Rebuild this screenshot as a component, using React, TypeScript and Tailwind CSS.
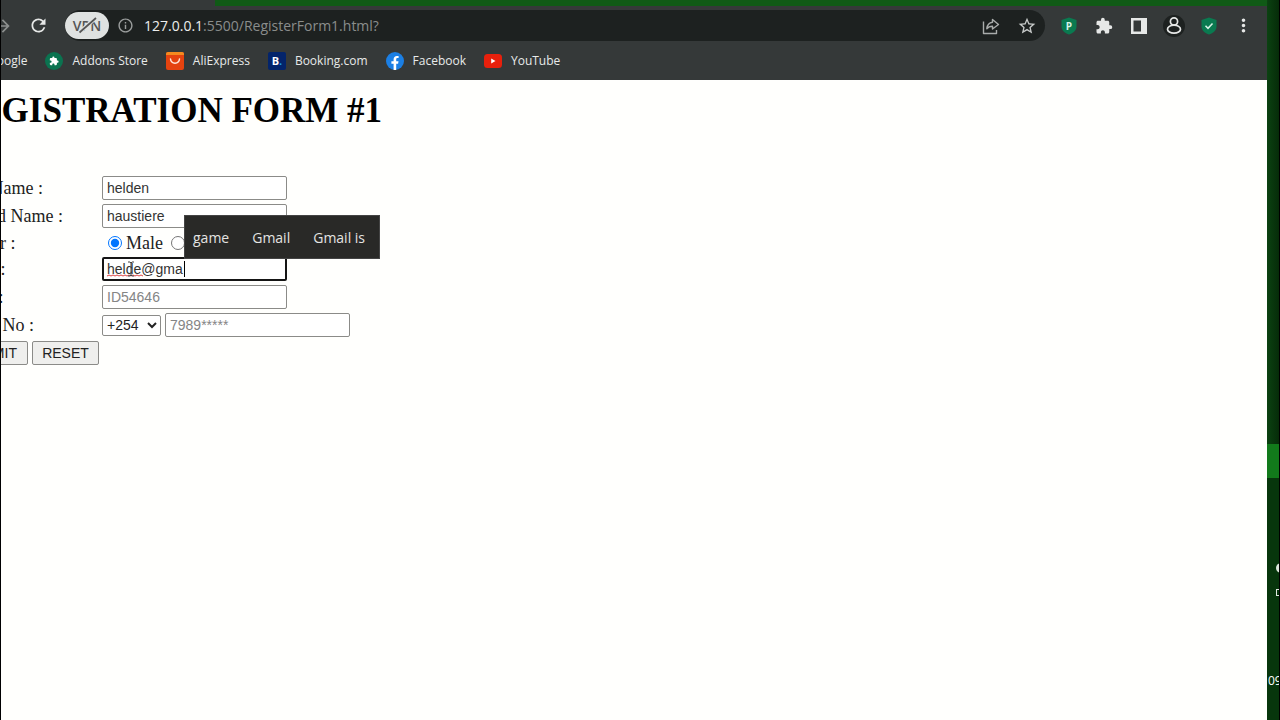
import React, { useState } from 'react';
import { MdArrowForward, MdExtension, MdInfoOutline, MdMoreVert, MdRefresh, MdStarBorder } from 'react-icons/md';

interface Bookmark {
  label: string;
  icon: React.ReactNode;
}

const BOOKMARKS: Bookmark[] = [
  {
    label: 'Google',
    icon: <span className="block w-4 h-4 rounded-full bg-white" />,
  },
  {
    label: 'Addons Store',
    icon: (
      <span className="flex w-[18px] h-[18px] items-center justify-center rounded-full bg-[#0b7350] text-white">
        <MdExtension size={10} />
      </span>
    ),
  },
  {
    label: 'AliExpress',
    icon: (
      <svg viewBox="0 0 18 18" className="w-[18px] h-[18px]">
        <rect width="18" height="18" rx="2" fill="#e5430f" />
        <path d="M0 2a2 2 0 0 1 2-2h14a2 2 0 0 1 2 2v1H0z" fill="#f58a1f" />
        <path d="M4.5 7c.6 5.500 8.400 5.500 9 0" fill="none" stroke="#ffe9dc" strokeWidth="1.500" strokeLinecap="round" />
      </svg>
    ),
  },
  {
    label: 'Booking.com',
    icon: (
      <span className="flex w-[18px] h-[18px] items-center justify-center rounded-xs bg-[#03246b] text-[11px] font-bold text-white">
        B<span className="text-[#1c9be0]">.</span>
      </span>
    ),
  },
  {
    label: 'Facebook',
    icon: (
      <svg viewBox="0 0 18 18" className="w-[18px] h-[18px]">
        <circle cx="9" cy="9" r="9" fill="#1b7fe4" />
        <path d="M7.600 18v-6.200H5.400V9.200h2.200V7.400c0-2.300 1.300-3.500 3.300-3.500.9 0 1.700.1 1.700.1v2.100h-1.100c-1 0-1.300.6-1.300 1.300v1.800h2.300l-.4 2.600h-1.900V18z" fill="#fff" />
      </svg>
    ),
  },
  {
    label: 'YouTube',
    icon: (
      <svg viewBox="0 0 18 18" className="w-[18px] h-[18px]">
        <rect y="2" width="18" height="14" rx="3.500" fill="#e8200c" />
        <path d="M7.200 6.500v5L11.500 9z" fill="#fff" />
      </svg>
    ),
  },
];

const SUGGESTIONS = ['game', 'Gmail', 'Gmail is'];

const TEXT_FIELD = 'w-[185px] h-6 px-1 pb-px border border-[#8b8b88] rounded-xs bg-white text-sm text-[#333] placeholder-[#858585] outline-none';
const PUSH_BUTTON = 'h-6 px-2 pb-px border border-[#8b8b88] rounded-xs bg-[#efefed] text-sm text-[#222]';

const Toolbar: React.FC = () => {
  return (
    <div className="flex items-center h-[31px] text-[#e6e8e7]">
      <button aria-label="Forward" className="-ml-2 text-[#8c8f8e]">
        <MdArrowForward size={20} />
      </button>
      <button aria-label="Reload" className="ml-[15px] mr-4">
        <MdRefresh size={21} />
      </button>
      <div className="flex flex-1 items-center h-[31px] mr-1.5 pr-2 rounded-full bg-[#1d2120]">
        <button aria-label="VPN" className="relative w-11 h-[27px] rounded-full bg-[#dfe2e1] text-[#555] text-sm font-semibold">
          VPN
          <svg viewBox="0 0 44 27" className="absolute inset-0 w-11 h-[27px]">
            <path d="M15 20 30 6.500" stroke="#dfe2e1" strokeWidth="4" />
            <path d="M14.500 20.500 31 6" stroke="#555" strokeWidth="1.700" />
          </svg>
        </button>
        <MdInfoOutline size={17} className="ml-2 mr-2.5 text-[#9b9e9d]" />
        <span className="flex-1 text-sm text-[#8a8d8c]">
          <span className="text-[#eceeed]">127.0.0.1</span>:5500/RegisterForm1.html?
        </span>
        <button aria-label="Share" className="mr-4 text-[#a9acab]">
          <svg viewBox="0 0 20 20" className="w-5 h-5" fill="none" stroke="currentColor" strokeWidth="1.400" strokeLinejoin="round">
            <path d="M2.500 5.500v12h13v-3.500" />
            <path d="M11.500 3.500 17.500 8.500 11.500 13v-2.800c-2.500 0-4.300.7-5.700 2.500.4-3.700 2.200-5.900 5.700-6.400z" />
          </svg>
        </button>
        <button aria-label="Bookmark this page" className="text-[#c6c9c8]">
          <MdStarBorder size={20} />
        </button>
      </div>
      <div className="flex items-center pr-[6px]">
        <button aria-label="Password manager" className="flex w-[35px] justify-center">
          <svg viewBox="0 0 18 18" className="w-[18px] h-[18px]">
            <path d="M9 .5 16.500 3v6.500c0 4-3.500 6.800-7.500 8-4-1.200-7.500-4-7.500-8V3z" fill="#0a7a50" />
            <text x="9" y="12.500" textAnchor="middle" fontSize="10" fontWeight="700" fill="#d8f3e7">P</text>
          </svg>
        </button>
        <button aria-label="Extensions" className="flex w-[35px] justify-center">
          <MdExtension size={18} />
        </button>
        <button aria-label="Side panel" className="flex w-[35px] justify-center">
          <svg viewBox="0 0 16 16" className="w-4 h-4">
            <path d="M0 0h16v16H0zM2.500 2.500v11h7.500v-11z" fill="currentColor" fillRule="evenodd" />
          </svg>
        </button>
        <button aria-label="Profile" className="flex w-[35px] justify-center">
          <svg viewBox="0 0 22 22" className="w-[22px] h-[22px]">
            <circle cx="11" cy="11" r="11" fill="#1d2120" />
            <g fill="none" stroke="currentColor" strokeWidth="1.700">
              <circle cx="11" cy="6.500" r="3.600" />
              <ellipse cx="11" cy="14.200" rx="6.500" ry="4" />
            </g>
          </svg>
        </button>
        <button aria-label="Protection" className="flex w-[35px] justify-center">
          <svg viewBox="0 0 18 18" className="w-[18px] h-[18px]">
            <path d="M9 .5 16.500 3v6.500c0 4-3.500 6.800-7.500 8-4-1.200-7.500-4-7.500-8V3z" fill="#0a7a50" />
            <path d="m5.500 8.800 2.500 2.500 4.500-4.800" fill="none" stroke="#d8f3e7" strokeWidth="1.500" />
          </svg>
        </button>
        <button aria-label="Menu" className="flex w-[35px] justify-center">
          <MdMoreVert size={21} />
        </button>
      </div>
    </div>
  );
};

const BookmarksBar: React.FC = () => {
  return (
    <nav className="flex items-center gap-[18px] h-10 -ml-[38px] text-xs text-[#e8eae9]">
      {BOOKMARKS.map(b => (
        <a key={b.label} href="#" className="flex items-center gap-[9px] whitespace-nowrap">
          {b.icon}
          {b.label}
        </a>
      ))}
    </nav>
  );
};

const RegisterForm: React.FC = () => {
  const [firstName, setFirstName] = useState('helden');
  const [secondName, setSecondName] = useState('haustiere');
  const [email, setEmail] = useState('helde@gma');
  const [gender, setGender] = useState('male');

  return (
    <form className="-ml-12 font-['Liberation_Sans',sans-serif]" onSubmit={e => e.preventDefault()}>
      <h1 className="pt-2.5 font-['Liberation_Serif',serif] text-[35px] leading-[42px] font-bold text-black whitespace-nowrap">
        REGISTRATION FORM #1
      </h1>
      <div className="grid grid-cols-[149px_1fr] gap-y-1 items-center mt-11 [&_label]:font-['Liberation_Serif',serif] [&_label]:text-lg [&_label]:leading-5 [&_label]:text-[#222]">
        <label htmlFor="first">First Name :</label>
        <input id="first" className={TEXT_FIELD} value={firstName} onChange={e => setFirstName(e.target.value)} />

        <label htmlFor="second">Second Name :</label>
        <input id="second" className={TEXT_FIELD} value={secondName} onChange={e => setSecondName(e.target.value)} />

        <label htmlFor="male">Gender :</label>
        <div className="flex items-center h-[21px] pl-1.5">
          <input id="male" type="radio" name="gender" className="w-3.5 h-3.5 mr-1" checked={gender === 'male'} onChange={() => setGender('male')} />
          <label htmlFor="male">Male</label>
          <input type="radio" name="gender" aria-label="Female" className="w-3.5 h-3.5 ml-2" checked={gender === 'female'} onChange={() => setGender('female')} />
        </div>

        <label htmlFor="email">Email :</label>
        <div className="relative flex">
          <input
            id="email"
            spellCheck={false}
            className="w-[185px] h-6 px-[3px] pb-px border-2 border-[#151515] rounded-xs bg-white text-sm text-[#333] outline-none"
            value={email}
            onChange={e => setEmail(e.target.value)}
          />
          <svg viewBox="0 0 36 3" className="absolute left-[5px] bottom-1 w-9 h-[3px]">
            <path d="M0 2 2 1 4 2 6 1 8 2 10 1 12 2 14 1 16 2 18 1 20 2 22 1 24 2 26 1 28 2 30 1 32 2 34 1 36 2" fill="none" stroke="#dc4444" />
          </svg>
          <span className="absolute left-[82px] top-1 w-px h-4 bg-black" />
          <svg viewBox="0 0 8 16" className="absolute left-[25px] top-1 w-2 h-4">
            <path d="M1 1h2l1 1 1-1h2M4 2v12M1 15h2l1-1 1 1h2" fill="none" stroke="#444" />
          </svg>
          <div className="absolute left-[82px] bottom-[22px] flex items-center gap-[23px] h-11 pt-0.5 pl-2 pr-3.5 border border-[#444] bg-[#292927] font-['Open_Sans',sans-serif] text-sm text-[#e4e4e2] whitespace-nowrap">
            {SUGGESTIONS.map(s => (
              <button key={s} type="button">{s}</button>
            ))}
          </div>
        </div>

        <label htmlFor="idno">ID No:</label>
        <input id="idno" className={TEXT_FIELD} placeholder="ID54646" />

        <label htmlFor="phone">Phone No :</label>
        <div className="flex items-center gap-1">
          <select aria-label="Country code" className="w-[59px] h-[21px] border border-[#8b8b88] rounded-xs bg-white text-sm text-[#222]">
            <option>+254</option>
          </select>
          <input id="phone" className={TEXT_FIELD} placeholder="7989*****" />
        </div>

        <div className="col-span-2 flex gap-1">
          <button type="submit" className={PUSH_BUTTON + ' w-[75px]'}>SUBMIT</button>
          <button type="reset" className={PUSH_BUTTON + ' w-[67px]'}>RESET</button>
        </div>
      </div>
    </form>
  );
};

const Taskbar: React.FC = () => {
  return (
    <aside className="w-3 shrink-0 overflow-hidden bg-[#07360c] text-white">
      <div className="h-[444px] bg-linear-to-r from-[#0b4211] to-[#062c09]" />
      <div className="h-[34px] bg-[#127a1b]" />
      <div className="mt-[85px] ml-[9px] w-2.5 h-2.5 rounded-full bg-[#dfe8df]" />
      <div className="mt-4 ml-[9px] w-3 h-[7px] border border-[#dfe8df]" />
      <div className="mt-[77px] ml-px text-xs">09:50</div>
    </aside>
  );
};

export default function App() {
  return (
    <div className="flex min-h-screen border-x border-black bg-black font-['Open_Sans',sans-serif]">
      <div className="flex flex-col flex-1 min-w-0 overflow-hidden bg-[#fffffd]">
        <header className="h-20 shrink-0 bg-[#353939]">
          <div className="h-1.5 mb-1 ml-[214px] bg-[#105a16]" />
          <Toolbar />
          <BookmarksBar />
        </header>
        <main className="flex-1">
          <RegisterForm />
        </main>
      </div>
      <Taskbar />
    </div>
  );
}
